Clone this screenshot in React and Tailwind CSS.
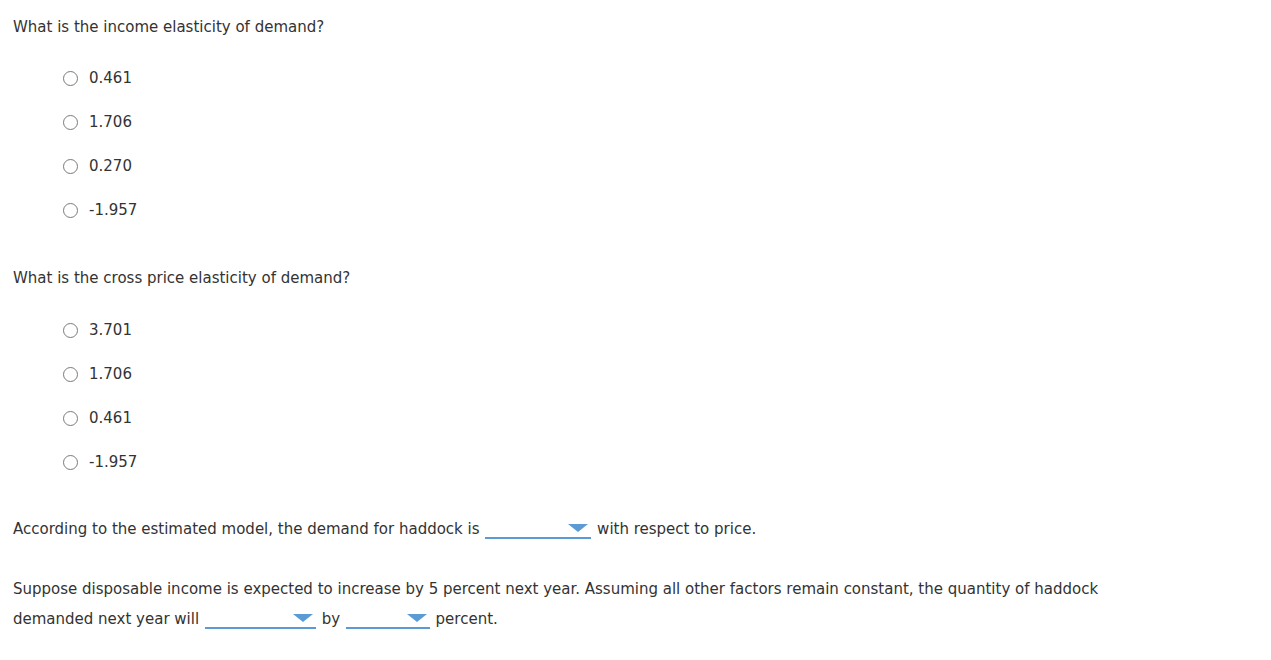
const font = { fontFamily: '"DejaVu Sans", Verdana, sans-serif' };

const Radio = ({ label }) => (
  <div className="flex items-center h-[44px] pl-[50px]">
    <span className="w-[15px] h-[15px] rounded-full border border-[#7a7a7a] bg-white shrink-0" />
    <span className="ml-[11px]">{label}</span>
  </div>
);

const Dropdown = ({ width }) => (
  <span
    className={`inline-block overflow-hidden border-b-2 border-[#5b9bd5] h-[20px] align-[-5px] mx-[1px] ${width}`}
  >
    <span className="flex justify-end pt-[5px] pr-[3px]">
      <svg width="20" height="8" viewBox="0 0 20 8" className="block">
        <polygon points="0,0 20,0 10,8" fill="#5b9bd5" />
      </svg>
    </span>
  </span>
);

export default function App() {
  return (
    <div className="px-[13px] pt-[1px] text-[15px] text-[#333]" style={font}>
      <div className="h-[20px] mt-[16px] leading-[20px]">What is the income elasticity of demand?</div>
      <div className="mt-[19px]">
        <Radio label="0.461" />
        <Radio label="1.706" />
        <Radio label="0.270" />
        <Radio label="-1.957" />
      </div>
      <div className="h-[20px] mt-[36px] leading-[20px]">What is the cross price elasticity of demand?</div>
      <div className="mt-[20px]">
        <Radio label="3.701" />
        <Radio label="1.706" />
        <Radio label="0.461" />
        <Radio label="-1.957" />
      </div>
      <div className="mt-[30px] leading-[30px]">
        According to the estimated model, the demand for haddock is{' '}
        <Dropdown width="w-[106px]" />{' '}with respect to price.
      </div>
      <div className="mt-[30px] leading-[30px] max-w-[1100px]">
        Suppose disposable income is expected to increase by 5 percent next year. Assuming all other factors remain
        constant, the quantity of haddock demanded next year will <Dropdown width="w-[111px]" /> by{' '}
        <Dropdown width="w-[84px]" /> percent.
      </div>
    </div>
  );
}
